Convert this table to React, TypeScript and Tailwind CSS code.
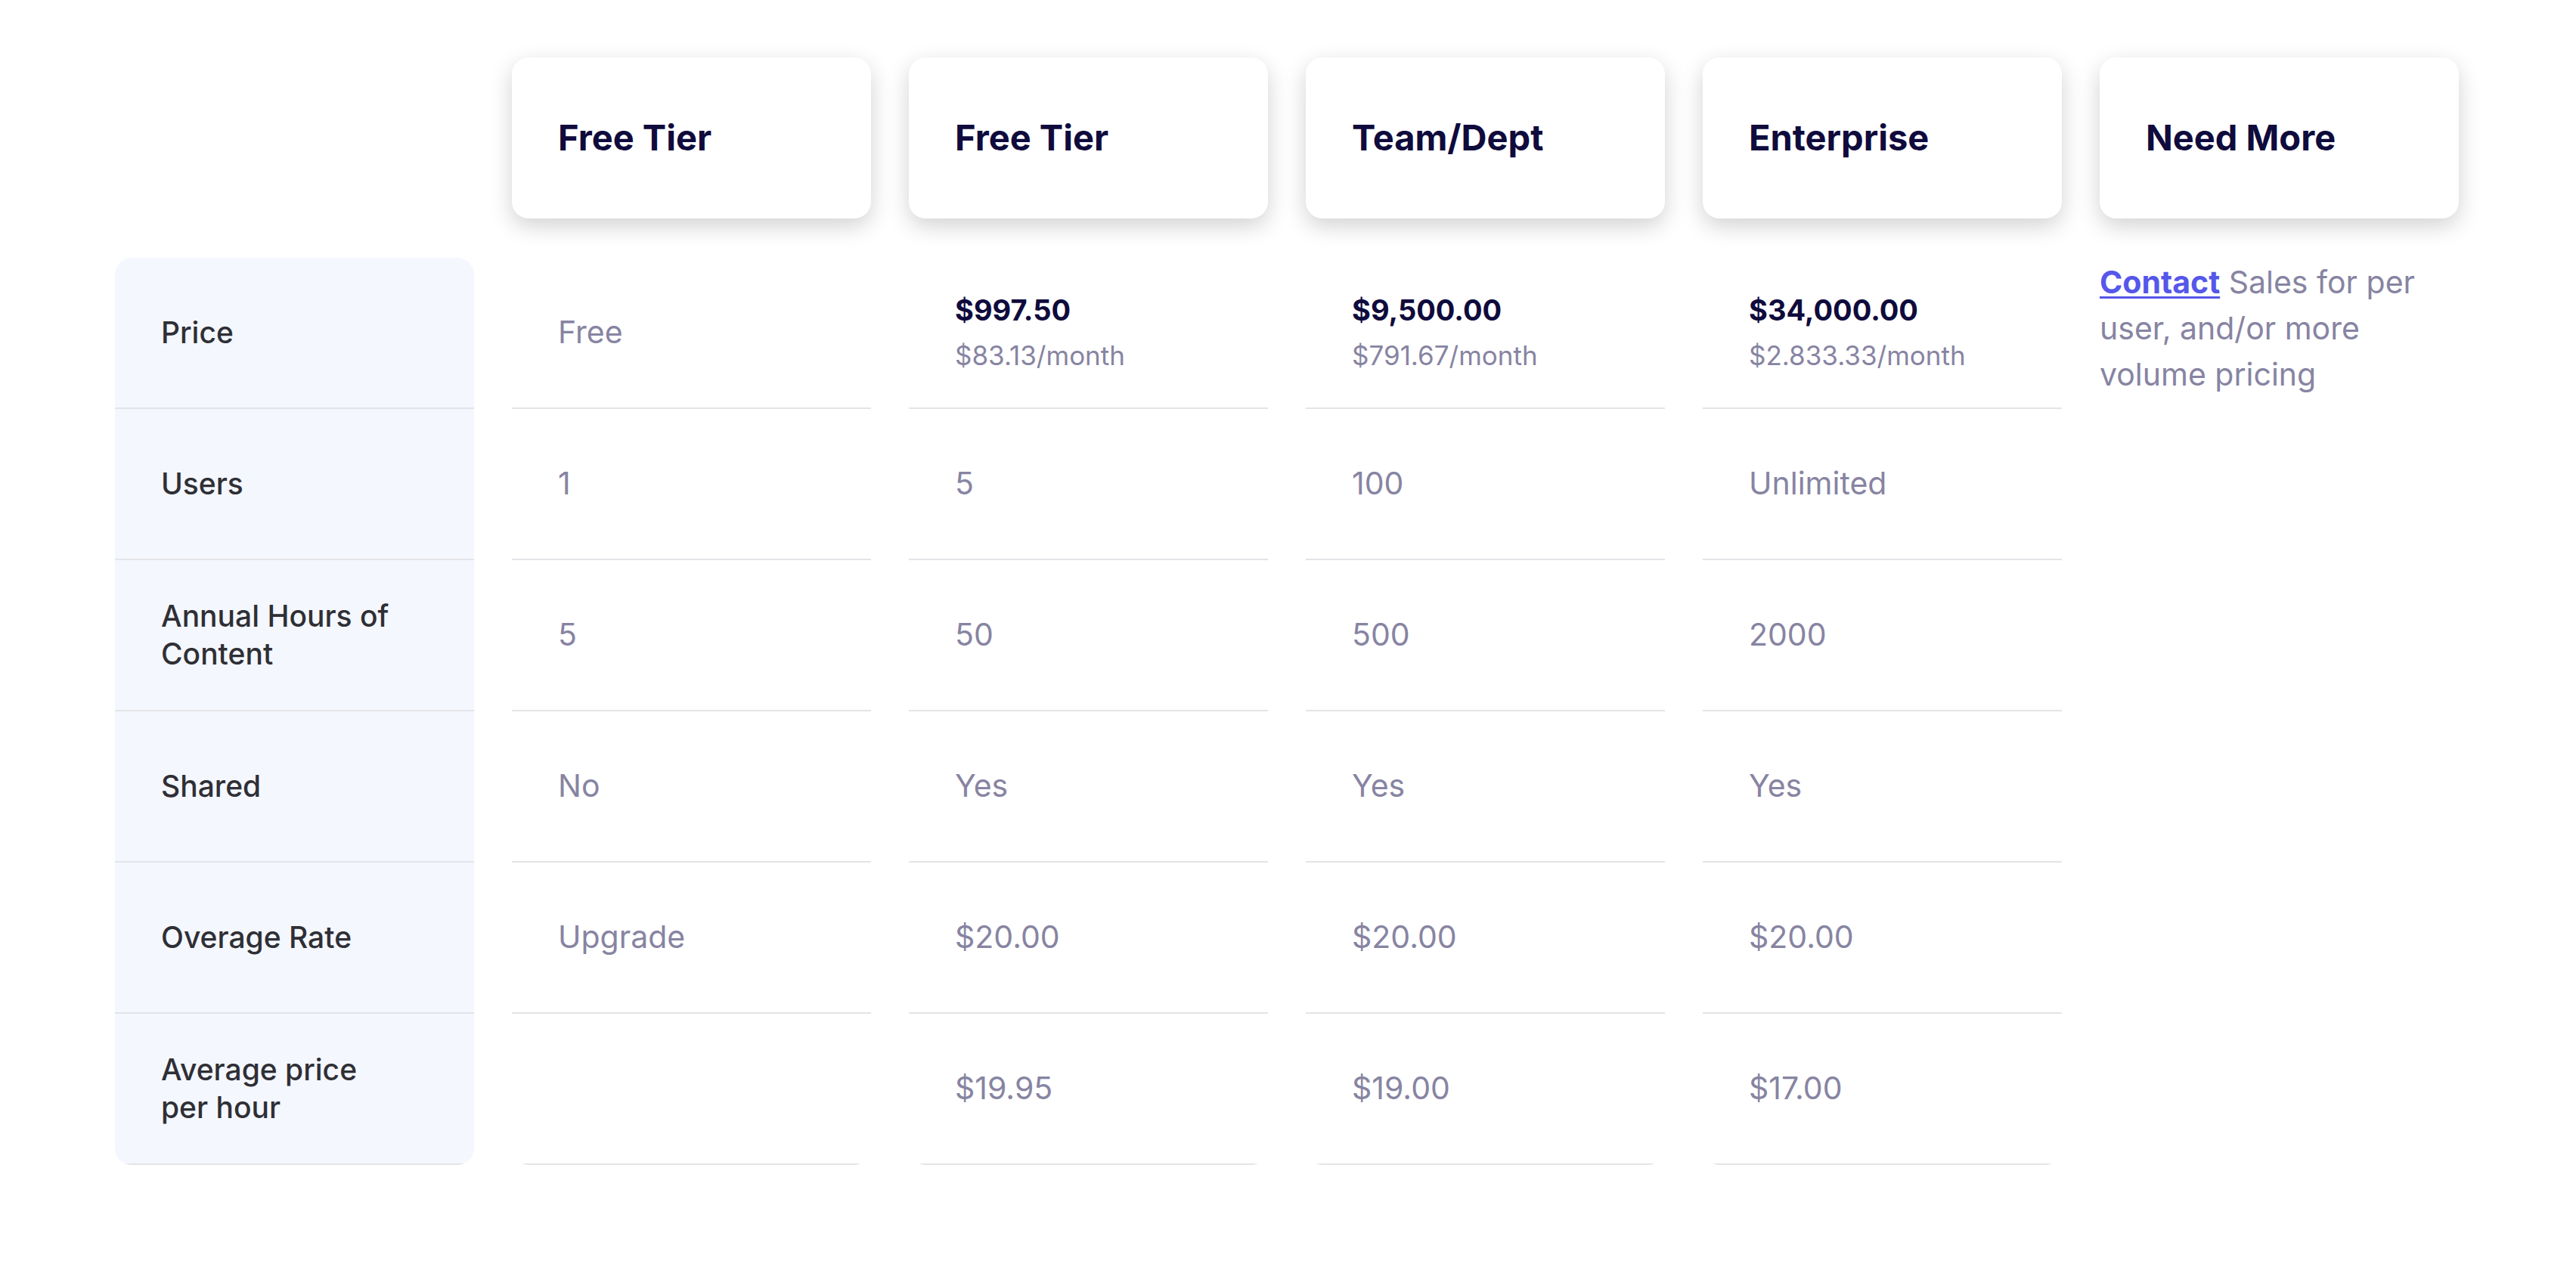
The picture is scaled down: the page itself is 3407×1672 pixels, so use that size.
const tiers = [
  {
    name: "Free Tier",
    price: { plain: "Free" },
    users: "1",
    hours: "5",
    shared: "No",
    overage: "Upgrade",
    avg: "",
  },
  {
    name: "Free Tier",
    price: { main: "$997.50", sub: "$83.13/month" },
    users: "5",
    hours: "50",
    shared: "Yes",
    overage: "$20.00",
    avg: "$19.95",
  },
  {
    name: "Team/Dept",
    price: { main: "$9,500.00", sub: "$791.67/month" },
    users: "100",
    hours: "500",
    shared: "Yes",
    overage: "$20.00",
    avg: "$19.00",
  },
  {
    name: "Enterprise",
    price: { main: "$34,000.00", sub: "$2.833.33/month" },
    users: "Unlimited",
    hours: "2000",
    shared: "Yes",
    overage: "$20.00",
    avg: "$17.00",
  },
];

const labels = ["Price", "Users", "Annual Hours of Content", "Shared", "Overage Rate", "Average price per hour"];

const Cell = ({ children }: { children?: React.ReactNode }) => (
  <div className="h-[200px] flex items-center px-[61px] border-b-2 border-[#e4e4e8]">{children}</div>
);

const HeaderCard = ({ title }: { title: string }) => (
  <div className="h-[213px] rounded-[22px] bg-white flex items-center px-[61px] shadow-[0_10px_30px_rgba(0,0,0,0.18)]">
    <h3 className="text-[47px] font-bold text-[#0f0b3c]">{title}</h3>
  </div>
);

export default function App() {
  return (
    <div className="min-h-[1672px] bg-white pl-[152px] pt-[76px] font-['Inter',sans-serif]">
      <div className="grid grid-cols-[repeat(6,475px)] gap-x-[50px] gap-y-[52px]">
        <div />
        {tiers.map((t, i) => (
          <HeaderCard key={i} title={t.name} />
        ))}
        <HeaderCard title="Need More" />

        {/* labels */}
        <div className="rounded-[22px] overflow-hidden bg-[#f4f7fe]">
          {labels.map((l) => (
            <Cell key={l}>
              <span className="max-w-[330px] text-[39px] leading-[50px] font-medium text-[#2f2f35]">{l}</span>
            </Cell>
          ))}
        </div>

        {tiers.map((t, i) => {
          const vals = [t.users, t.hours, t.shared, t.overage, t.avg];
          return (
            <div key={i} className="rounded-[22px] overflow-hidden">
              <Cell>
                {t.price.plain ? (
                  <span className="text-[41px] text-[#8784a2]">{t.price.plain}</span>
                ) : (
                  <div className="flex flex-col">
                    <span className="text-[38px] leading-[50px] font-bold text-[#0f0b3c]">{t.price.main}</span>
                    <span className="text-[35px] leading-[50px] text-[#8784a2] mt-[10px]">{t.price.sub}</span>
                  </div>
                )}
              </Cell>
              {vals.map((v, j) => (
                <Cell key={j}>
                  <span className="text-[41px] text-[#8784a2]">{v}</span>
                </Cell>
              ))}
            </div>
          );
        })}

        <div className="pt-[2px]">
          <p className="text-[41px] leading-[61px] text-[#8784a2] pr-[20px]">
            <a href="#" className="font-bold text-[#5557ea] underline underline-offset-[4px] decoration-[3px]">
              Contact
            </a>{" "}
            Sales for per user, and/or more volume pricing
          </p>
        </div>
      </div>
    </div>
  );
}
